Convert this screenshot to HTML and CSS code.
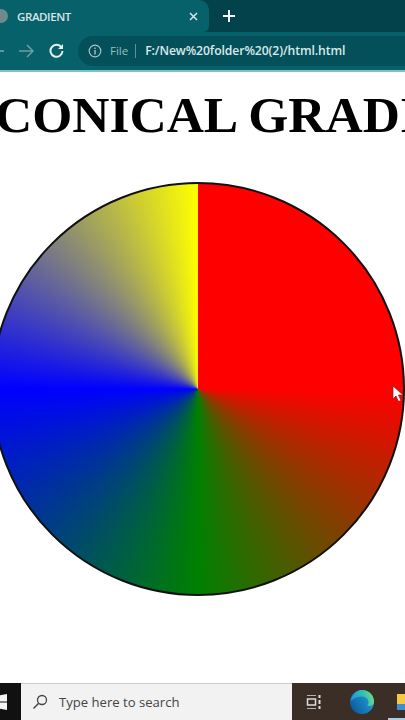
FILE: index.html
```html
<!DOCTYPE html>
<html lang="en">
<head>
  <meta charset="UTF-8">
  <title>GRADIENT</title>
  <link rel="stylesheet" href="styles.css">
</head>
<body>

  <!-- Browser tabs -->
  <div class="tab-bar">
    <div class="tab">
      <span class="favicon"></span>
      <span class="tab-title">GRADIENT</span>
      <svg class="tab-close" width="9" height="9" viewBox="0 0 9 9"><path d="M1 1l7 7M8 1l-7 7" stroke="#d5e6e6" stroke-width="1.5"/></svg>
    </div>
    <svg class="new-tab" width="12" height="12" viewBox="0 0 12 12"><path d="M6 0v12M0 6h12" stroke="#f2f7f7" stroke-width="2"/></svg>
  </div>

  <!-- Address bar -->
  <div class="tool-bar">
    <svg class="nav-back" width="8" height="12" viewBox="0 0 8 12"><path d="M0 6h4" stroke="#7fa9a9" stroke-width="1.5"/></svg>
    <svg class="nav-forward" width="15" height="14" viewBox="0 0 15 14"><path d="M0 7h14M8 1l6 6-6 6" fill="none" stroke="#6f9fa0" stroke-width="1.5"/></svg>
    <svg class="nav-reload" width="15" height="15" viewBox="0 0 15 15"><path d="M12.500 4.500A6 6 0 1 0 13.500 8" fill="none" stroke="#e6f0f0" stroke-width="2"/><path d="M14 1v5H9z" fill="#e6f0f0"/></svg>
    <div class="omnibox">
      <svg class="info-icon" width="14" height="14" viewBox="0 0 14 14"><circle cx="7" cy="7" r="5.800" fill="none" stroke="#a9c4c4" stroke-width="1.200"/><path d="M7 6v4.500M7 3.500v1.400" stroke="#a9c4c4" stroke-width="1.400"/></svg>
      <span class="file-label">File</span>
      <span class="omni-sep"></span>
      <span class="url">F:/New%20folder%20(2)/html.html</span>
    </div>
  </div>

  <!-- Page -->
  <main class="page">
    <h1>CONICAL GRADIENT</h1>
    <div class="wheel"></div>
    <svg class="cursor" width="12" height="18" viewBox="0 0 12 18"><path d="M1 1v13l3-3 2.500 5.500 2.500-1-2.500-5.500h4.500z" fill="#fff" stroke="#8a1a1a" stroke-width=".7"/></svg>
  </main>

  <!-- Windows taskbar -->
  <div class="taskbar">
    <div class="start">
      <svg width="16" height="16" viewBox="0 0 16 16"><path d="M0 2.500l7-1v6H0zM8 1.300l8-1.300v7.500H8zM0 8.500h7v6l-7-1zM8 8.500h8V16l-8-1.300z" fill="#f4f4f4"/></svg>
    </div>
    <div class="search-box">
      <svg width="16" height="16" viewBox="0 0 16 16"><circle cx="10" cy="6" r="4.500" fill="none" stroke="#444" stroke-width="1.300"/><path d="M6.700 9.300L1.500 14.500" stroke="#444" stroke-width="1.500"/></svg>
      <span>Type here to search</span>
    </div>
    <div class="tray">
      <svg class="task-view" width="16" height="14" viewBox="0 0 16 14"><path d="M1 0h9M1 14h9" stroke="#ddd" stroke-width="1.500"/><rect x="1.500" y="4" width="8" height="6" fill="none" stroke="#ddd" stroke-width="1.500"/><path d="M13.500 0v3M13.500 5v4M13.500 11v3" stroke="#ddd" stroke-width="2"/></svg>
      <svg class="edge" width="24" height="24" viewBox="0 0 24 24">
        <defs>
          <linearGradient id="edgeBase" x1="0" y1="1" x2="1" y2="0.400"><stop offset="0" stop-color="#0a4f9c"/><stop offset="1" stop-color="#1f9fd0"/></linearGradient>
          <linearGradient id="edgeTop" x1="0" y1="0.600" x2="1" y2="0.400"><stop offset="0" stop-color="#1f8fdc"/><stop offset="0.600" stop-color="#33c0b8"/><stop offset="1" stop-color="#74dc7c"/></linearGradient>
        </defs>
        <circle cx="12" cy="12" r="12" fill="url(#edgeBase)"/>
        <path d="M0.500 11C2 4 7 0 12 0c7 0 12 5 12 12 0 3-3 4.500-7 4 2-2 2-5 .5-7C15 5.500 8 5 0.500 11z" fill="url(#edgeTop)"/>
      </svg>
      <span class="folder"></span>
    </div>
    <span class="active-mark"></span>
  </div>

</body>
</html>
```

FILE: styles.css
```css
/* General Reset */
* {
  margin: 0;
  padding: 0;
  box-sizing: border-box;
}

html,
body {
  height: 720px;
  overflow: hidden;
}

body {
  display: flex;
  flex-direction: column;
  width: 405px;
  background-color: #fff;
  font-family: 'Liberation Sans', Arial, sans-serif;
}

/* Tab strip */
.tab-bar {
  display: flex;
  align-items: center;
  height: 32px;
  background-color: #03424a;
}

.tab {
  display: flex;
  align-items: center;
  width: 209px;
  height: 32px;
  padding-left: 17px;
  background-color: #07616a;
  border-bottom-right-radius: 6px;
  border-top-right-radius: 10px;
  position: relative;
}

.favicon {
  position: absolute;
  left: -6px;
  top: 9px;
  width: 14px;
  height: 14px;
  border-radius: 50%;
  background-color: #6f8a8c;
}

.tab-title {
  flex: 1;
  font-family: 'Open Sans', sans-serif;
  font-size: 11.5px;
  font-weight: 600;
  letter-spacing: -0.4px;
  color: #d6e5e5;
}

.tab-close {
  margin-right: 11px;
}

.new-tab {
  margin-left: 14px;
}

/* Address bar */
.tool-bar {
  display: flex;
  align-items: center;
  height: 40px;
  padding-bottom: 1px;
  background-color: #07616a;
  border-bottom: 2px solid #7fc1c4;
}

.nav-back {
  margin-right: 11px;
}

.nav-forward {
  margin-right: 15px;
}

.nav-reload {
  margin-right: 14px;
}

.omnibox {
  display: flex;
  align-items: center;
  flex: 1;
  height: 30px;
  padding-left: 10px;
  background-color: #03505a;
  border-radius: 15px 0 0 15px;
}

.file-label {
  margin-left: 8px;
  font-family: 'Open Sans', sans-serif;
  font-size: 11.5px;
  color: #9fbcbc;
}

.omni-sep {
  width: 1px;
  height: 14px;
  margin: 0 8px 0 7px;
  background-color: #5f9396;
}

.url {
  margin-left: 1px;
  font-family: 'Open Sans', sans-serif;
  font-size: 12.2px;
  font-weight: 600;
  letter-spacing: -0.1px;
  white-space: nowrap;
  color: #dbe9e9;
}

/* Page content */
.page {
  flex: 1;
  position: relative;
  overflow: hidden;
}

h1 {
  margin: 15px 0 0 -5px;
  font-family: 'Liberation Serif', 'Times New Roman', serif;
  font-size: 51.5px;
  line-height: 56px;
  font-weight: bold;
  white-space: nowrap;
  color: #000;
}

.wheel {
  width: 414px;
  height: 414px;
  margin: 38.5px 0 0 -9px;
  border: 2.5px solid #111;
  border-radius: 50%;
  background: conic-gradient(#f00 0deg, #f00 90deg, #008000 180deg, #00f 270deg, #ff0 360deg);
}

.cursor {
  position: absolute;
  left: 392px;
  top: 313px;
}

/* Taskbar */
.taskbar {
  display: flex;
  height: 37px;
  background-color: #3a2e26;
  position: relative;
}

.start {
  display: flex;
  align-items: center;
  justify-content: flex-end;
  flex-shrink: 0;
  width: 21px;
  padding-right: 14px;
  background-color: #111;
  overflow: hidden;
}

.start svg {
  flex-shrink: 0;
}

.search-box {
  display: flex;
  align-items: center;
  gap: 11px;
  width: 271px;
  padding-left: 11px;
  background-color: #f2f2f2;
  border-top: 1px solid #ccc;
  font-family: 'Open Sans', sans-serif;
  font-size: 13.1px;
  color: #444;
}

.tray {
  display: flex;
  align-items: center;
  flex: 1;
  padding-left: 14px;
  overflow: hidden;
}

.task-view {
  flex-shrink: 0;
}

.edge {
  flex-shrink: 0;
  margin-left: 28px;
}

.folder {
  flex-shrink: 0;
  width: 20px;
  height: 16px;
  margin-left: 23px;
  background: linear-gradient(#f6c945 65%, #3f8fd0 65%);
}

.active-mark {
  position: absolute;
  right: 0;
  bottom: 0;
  width: 17px;
  height: 2px;
  background-color: #a9cfe8;
}
```
